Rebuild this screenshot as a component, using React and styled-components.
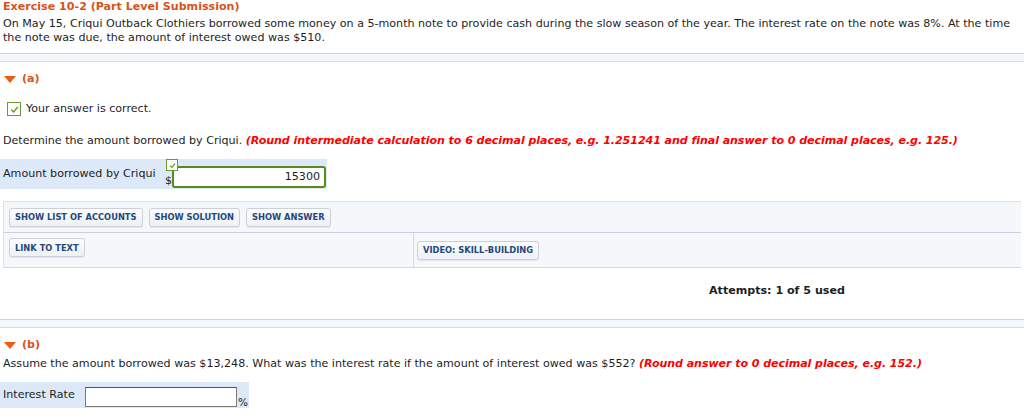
import React from "react";
import styled, { createGlobalStyle } from "styled-components";

const Global = createGlobalStyle`
  html, body { margin: 0; padding: 0; background: #fff; }
  body {
    font-family: "DejaVu Sans", Verdana, sans-serif;
    font-size: 11.1px;
    line-height: 14px;
    color: #1e1e1e;
  }
`;

const Page = styled.div`
  width: 1024px;
  height: 417px;
  overflow: hidden;
`;

const Header = styled.div`
  padding: 0 3px;
`;

const Title = styled.div`
  color: #d8531c;
  font-weight: bold;
  line-height: 14px;
`;

const Para = styled.p`
  margin: 3px 0 0;
  line-height: 14px;
`;

const Separator = styled.div`
  margin-top: ${(p) => p.$mt || 0}px;
  height: 7px;
  background: #f5f8fb;
  border-top: 1px solid #cdd1e0;
  border-bottom: 1px solid #d9dce2;
`;

const PartHead = styled.div`
  display: flex;
  align-items: center;
  gap: 6px;
  padding-left: 4px;
  margin-top: ${(p) => p.$mt || 0}px;
  color: #d8531c;
  font-weight: bold;
  height: 14px;
`;

const Section = styled.div`
  padding: 0 3px;
`;

const CorrectRow = styled.div`
  display: flex;
  align-items: center;
  gap: 5px;
  margin-top: 16px;
  padding-left: 4px;
  height: 14px;
`;

const CheckBox = styled.span`
  box-sizing: border-box;
  width: ${(p) => p.$size}px;
  height: ${(p) => p.$size}px;
  border: 1px solid #6c9a2e;
  background: #fff;
  display: inline-flex;
  align-items: center;
  justify-content: center;
  flex: none;
`;

const Line = styled.div`
  margin-top: ${(p) => p.$mt || 0}px;
  line-height: 14px;
  white-space: nowrap;
`;

const Red = styled.span`
  color: #ff0000;
  font-weight: bold;
  font-style: italic;
  letter-spacing: -0.08px;
`;

const AnswerRow = styled.div`
  display: flex;
  align-items: center;
  width: ${(p) => p.$w}px;
  height: ${(p) => p.$h}px;
  margin-top: ${(p) => p.$mt || 0}px;
  margin-left: -3px;
  padding-left: 3px;
  box-sizing: border-box;
  background: #dde9f8;
`;

const Label = styled.span`
  width: ${(p) => p.$w}px;
  flex: none;
  white-space: nowrap;
`;

const InputWrap = styled.div`
  position: relative;
  display: flex;
  align-items: flex-end;
  height: 100%;
`;

const Dollar = styled.span`
  align-self: flex-end;
  margin-bottom: 2px;
  line-height: 12px;
  width: 7px;
`;

const SmallCheck = styled.span`
  position: absolute;
  left: 1px;
  top: 0;
  box-sizing: border-box;
  width: 12px;
  height: 12px;
  border: 1px solid #6c9a2e;
  background: #fff;
  display: flex;
  align-items: center;
  justify-content: center;
`;

const GreenInput = styled.div`
  box-sizing: border-box;
  width: 154px;
  height: 22px;
  margin-bottom: 1px;
  border: 2px solid #5a8a1c;
  border-radius: 3px;
  background: #fff;
  display: flex;
  align-items: center;
  justify-content: flex-end;
  padding-right: 4px;
`;

const PlainInput = styled.div`
  box-sizing: border-box;
  width: 152px;
  height: 20px;
  border: 1px solid #7a7a7a;
  border-top-color: #555;
  background: #fff;
  margin-bottom: 1px;
`;

const Percent = styled.span`
  align-self: flex-end;
  margin-left: 1px;
  font-size: 10.5px;
  line-height: 12px;
`;

const Panel = styled.div`
  margin-top: 12px;
  border-top: 1px solid #dde0e6;
  border-left: 1px solid #dde0e6;
  border-bottom: 1px solid #d5d8de;
  background: #f5f8fb;
`;

const PanelRow = styled.div`
  display: flex;
  align-items: center;
  gap: 6px;
  height: 30px;
  padding-left: 5px;
  border-bottom: 1px solid #cbcfdf;
`;

const PanelGrid = styled.div`
  display: grid;
  grid-template-columns: 409px 1fr;
  height: 34px;
`;

const PanelCell = styled.div`
  display: flex;
  align-items: ${(p) => (p.$top ? "flex-start" : "center")};
  padding-left: ${(p) => p.$pl}px;
  padding-top: ${(p) => (p.$top ? 5 : 0)}px;
  border-left: ${(p) => (p.$divider ? "1px solid #d5d8e0" : "none")};
`;

const Button = styled.button`
  font-family: "DejaVu Sans", Verdana, sans-serif;
  font-size: 8.3px;
  font-weight: bold;
  color: #24487e;
  height: 19px;
  padding: 0 5px;
  border: 1px solid #cdd0d6;
  border-radius: 3px;
  background: linear-gradient(#fbfcfd, #eef1f5);
  box-shadow: 0 1px 0 #e3e6ea;
  cursor: pointer;
  white-space: nowrap;
`;

const Attempts = styled.div`
  margin-top: 16px;
  padding-left: 709px;
  font-weight: bold;
  height: 14px;
`;

const Triangle = () => (
  <svg width="12" height="7" viewBox="0 0 12 7">
    <polygon points="0,0 12,0 6,7" fill="#f05a14" />
  </svg>
);

const Tick = ({ s }) => (
  <svg width={s} height={s} viewBox="0 0 10 10">
    <polyline points="2,5.2 4.2,7.2 8,2.8" fill="none" stroke="#5f9a2a" strokeWidth="1.3" />
  </svg>
);

export default function App() {
  return (
    <Page>
      <Global />
      <Header>
        <Title>Exercise 10-2 (Part Level Submission)</Title>
        <Para>
          On May 15, Criqui Outback Clothiers borrowed some money on a 5-month note to provide cash during the slow season of the year. The interest rate on the note was 8%. At the time the note was due, the amount of interest owed was $510.
        </Para>
      </Header>
      <Separator $mt={8} />
      <PartHead $mt={10}>
        <Triangle />
        <span>(a)</span>
      </PartHead>
      <Section>
        <CorrectRow>
          <CheckBox $size={14}>
            <Tick s={11} />
          </CheckBox>
          <span>Your answer is correct.</span>
        </CorrectRow>
        <Line $mt={18}>
          Determine the amount borrowed by Criqui.{" "}
          <Red>(Round intermediate calculation to 6 decimal places, e.g. 1.251241 and final answer to 0 decimal places, e.g. 125.)</Red>
        </Line>
        <AnswerRow $w={327} $h={30} $mt={11}>
          <Label $w={162}>Amount borrowed by Criqui</Label>
          <InputWrap>
            <SmallCheck>
              <Tick s={9} />
            </SmallCheck>
            <Dollar>$</Dollar>
            <GreenInput>15300</GreenInput>
          </InputWrap>
        </AnswerRow>
        <Panel>
          <PanelRow>
            <Button>SHOW LIST OF ACCOUNTS</Button>
            <Button>SHOW SOLUTION</Button>
            <Button>SHOW ANSWER</Button>
          </PanelRow>
          <PanelGrid>
            <PanelCell $pl={5} $top>
              <Button>LINK TO TEXT</Button>
            </PanelCell>
            <PanelCell $pl={3} $divider>
              <Button>VIDEO: SKILL-BUILDING</Button>
            </PanelCell>
          </PanelGrid>
        </Panel>
      </Section>
      <Attempts>Attempts: 1 of 5 used</Attempts>
      <Separator $mt={21} />
      <PartHead $mt={10}>
        <Triangle />
        <span>(b)</span>
      </PartHead>
      <Section>
        <Line $mt={5}>
          Assume the amount borrowed was $13,248. What was the interest rate if the amount of interest owed was $552?{" "}
          <Red>(Round answer to 0 decimal places, e.g. 152.)</Red>
        </Line>
        <AnswerRow $w={249} $h={26} $mt={11}>
          <Label $w={82}>Interest Rate</Label>
          <InputWrap>
            <PlainInput />
            <Percent>%</Percent>
          </InputWrap>
        </AnswerRow>
      </Section>
    </Page>
  );
}
